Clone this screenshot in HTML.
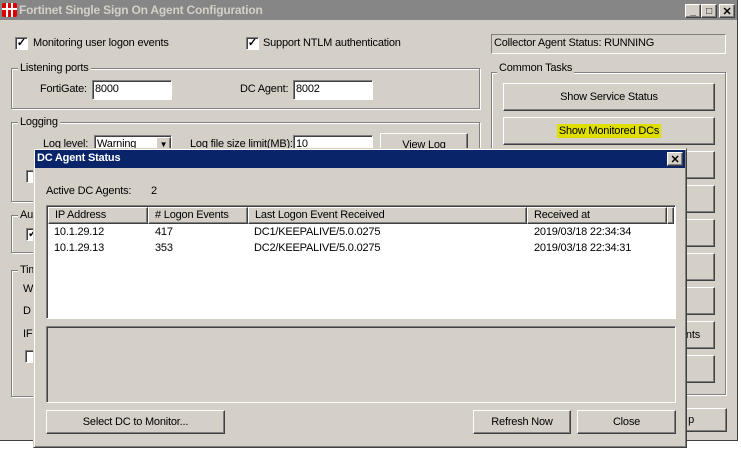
<!DOCTYPE html>
<html><head><style>
*{box-sizing:border-box;margin:0;padding:0}
body{width:741px;height:455px;background:#fff;position:relative;overflow:hidden;font-family:"Liberation Sans",sans-serif;font-size:11px;color:#000}
.a{position:absolute}
.t{position:absolute;white-space:nowrap;line-height:13px;letter-spacing:-0.2px}
.raised{background:#d4d0c8;border:1px solid;border-color:#fff #404040 #404040 #fff;box-shadow:inset -1px -1px 0 #808080}
.sunk{background:#fff;border:1px solid;border-color:#808080 #fff #fff #808080;box-shadow:inset 1px 1px 0 #404040}
.grp{position:absolute;border:1px solid #808080;box-shadow:1px 1px 0 #fff, inset 1px 1px 0 #fff}
.gl{position:absolute;background:#d4d0c8;padding:0 2px;line-height:13px;letter-spacing:-0.2px}
.btn{position:absolute;display:flex;align-items:center;justify-content:center;letter-spacing:-0.2px}
.cb{position:absolute;width:13px;height:13px;font-size:11px;line-height:10px;text-align:center;font-weight:bold}
.hd{position:absolute;top:0;height:17px;line-height:15px;padding-left:6px;letter-spacing:-0.2px}
</style></head><body>
<div class="a" style="left:0;top:0;width:738px;height:441px;background:#d4d0c8;border-right:1px solid #404040;border-bottom:1px solid #404040"></div>
<div class="a" style="left:0;top:0;width:737px;height:20px;background:#868686"></div>
<div class="a" style="left:2px;top:3px;width:15px;height:14px;background:#d00;border-radius:2px"></div>
<div class="a" style="left:6px;top:3px;width:2px;height:14px;background:#fff"></div>
<div class="a" style="left:11px;top:3px;width:2px;height:14px;background:#fff"></div>
<div class="a" style="left:2px;top:8px;width:15px;height:2px;background:#fff"></div>
<div class="t" style="left:19px;top:4px;color:#d4d0c8;font-weight:bold;font-size:12px">Fortinet Single Sign On Agent Configuration</div>
<div class="btn raised" style="left:685px;top:4px;width:16px;height:14px;font-size:10px;font-weight:bold">_</div>
<div class="btn raised" style="left:701px;top:4px;width:16px;height:14px;font-size:10px">□</div>
<div class="btn raised" style="left:719px;top:4px;width:16px;height:14px;font-size:11px;font-weight:bold">✕</div>

<div class="cb sunk" style="left:15px;top:37px">✓</div>
<div class="t" style="left:33px;top:37px">Monitoring user logon events</div>
<div class="cb sunk" style="left:246px;top:37px">✓</div>
<div class="t" style="left:263px;top:37px">Support NTLM authentication</div>
<div class="a" style="left:491px;top:34px;width:235px;height:20px;border:1px solid;border-color:#808080 #fff #fff #808080"></div>
<div class="t" style="left:494px;top:37px">Collector Agent Status: RUNNING</div>

<div class="grp" style="left:11px;top:68px;width:469px;height:41px"></div>
<div class="gl" style="left:18px;top:62px">Listening ports</div>
<div class="t" style="left:40px;top:83px">FortiGate:</div>
<div class="a sunk" style="left:92px;top:80px;width:80px;height:20px"></div>
<div class="t" style="left:95px;top:83px">8000</div>
<div class="t" style="left:240px;top:83px">DC Agent:</div>
<div class="a sunk" style="left:293px;top:80px;width:80px;height:20px"></div>
<div class="t" style="left:296px;top:83px">8002</div>

<div class="grp" style="left:11px;top:122px;width:469px;height:80px"></div>
<div class="gl" style="left:18px;top:116px">Logging</div>
<div class="t" style="left:43px;top:138px">Log level:</div>
<div class="a sunk" style="left:94px;top:135px;width:78px;height:20px"></div>
<div class="t" style="left:97px;top:138px">Warning</div>
<div class="btn raised" style="left:156px;top:137px;width:15px;height:14px;font-size:8px">▼</div>
<div class="t" style="left:190px;top:138px">Log file size limit(MB):</div>
<div class="a sunk" style="left:293px;top:135px;width:80px;height:20px"></div>
<div class="t" style="left:296px;top:138px">10</div>
<div class="btn raised" style="left:380px;top:133px;width:88px;height:24px">View Log</div>
<div class="cb sunk" style="left:26px;top:170px"></div>

<div class="grp" style="left:11px;top:215px;width:469px;height:38px"></div>
<div class="gl" style="left:18px;top:209px">Au</div>
<div class="cb sunk" style="left:26px;top:228px">✓</div>
<div class="grp" style="left:11px;top:270px;width:469px;height:127px"></div>
<div class="gl" style="left:18px;top:264px">Tim</div>
<div class="t" style="left:23px;top:283px">W</div>
<div class="t" style="left:23px;top:305px">D</div>
<div class="t" style="left:23px;top:328px">IF</div>
<div class="cb sunk" style="left:25px;top:350px"></div>

<div class="grp" style="left:491px;top:72px;width:235px;height:323px"></div>
<div class="gl" style="left:497px;top:62px">Common Tasks</div>
<div class="btn raised" style="left:503px;top:83px;width:212px;height:28px">Show Service Status</div>
<div class="btn raised" style="left:503px;top:117px;width:212px;height:28px"><span style="background:#dede00;padding:1px 2px">Show Monitored DCs</span></div>
<div class="btn raised" style="left:503px;top:151px;width:212px;height:28px"></div>
<div class="btn raised" style="left:503px;top:185px;width:212px;height:28px"></div>
<div class="btn raised" style="left:503px;top:219px;width:212px;height:28px"></div>
<div class="btn raised" style="left:503px;top:253px;width:212px;height:28px"></div>
<div class="btn raised" style="left:503px;top:287px;width:212px;height:28px"></div>
<div class="btn raised" style="left:503px;top:321px;width:212px;height:28px;justify-content:flex-end;padding-right:14px">ents</div>
<div class="btn raised" style="left:503px;top:355px;width:212px;height:28px"></div>
<div class="btn raised" style="left:640px;top:408px;width:87px;height:24px;justify-content:flex-end;padding-right:32px">p</div>

<div class="a" style="left:33px;top:148px;width:654px;height:300px;background:#d4d0c8;border:1px solid;border-color:#d4d0c8 #404040 #404040 #d4d0c8;box-shadow:inset 1px 1px 0 #fff,inset -1px -1px 0 #808080"></div>
<div class="a" style="left:35px;top:150px;width:650px;height:18px;background:#0a246a"></div>
<div class="t" style="left:37px;top:152px;color:#fff;font-weight:bold">DC Agent Status</div>
<div class="btn raised" style="left:667px;top:152px;width:16px;height:14px;font-weight:bold;font-size:11px">✕</div>
<div class="t" style="left:46px;top:185px">Active DC Agents:</div>
<div class="t" style="left:151px;top:185px">2</div>

<div class="a sunk" style="left:46px;top:205px;width:630px;height:114px"></div>
<div class="a" style="left:48px;top:207px;width:626px;height:17px">
<div class="hd raised" style="left:0;width:100px">IP Address</div>
<div class="hd raised" style="left:100px;width:100px"># Logon Events</div>
<div class="hd raised" style="left:200px;width:279px">Last Logon Event Received</div>
<div class="hd raised" style="left:479px;width:140px">Received at</div>
<div class="hd raised" style="left:619px;width:7px;padding:0"></div>
</div>
<div class="t" style="left:54px;top:226px">10.1.29.12</div>
<div class="t" style="left:155px;top:226px">417</div>
<div class="t" style="left:254px;top:226px">DC1/KEEPALIVE/5.0.0275</div>
<div class="t" style="left:534px;top:226px">2019/03/18 22:34:34</div>
<div class="t" style="left:54px;top:242px">10.1.29.13</div>
<div class="t" style="left:155px;top:242px">353</div>
<div class="t" style="left:254px;top:242px">DC2/KEEPALIVE/5.0.0275</div>
<div class="t" style="left:534px;top:242px">2019/03/18 22:34:31</div>

<div class="a" style="left:46px;top:326px;width:630px;height:77px;border:1px solid;border-color:#808080 #fff #fff #808080;box-shadow:inset 1px 1px 0 #404040"></div>
<div class="btn raised" style="left:46px;top:410px;width:179px;height:24px">Select DC to Monitor...</div>
<div class="btn raised" style="left:473px;top:410px;width:98px;height:24px">Refresh Now</div>
<div class="btn raised" style="left:577px;top:410px;width:99px;height:24px">Close</div>
</body></html>
